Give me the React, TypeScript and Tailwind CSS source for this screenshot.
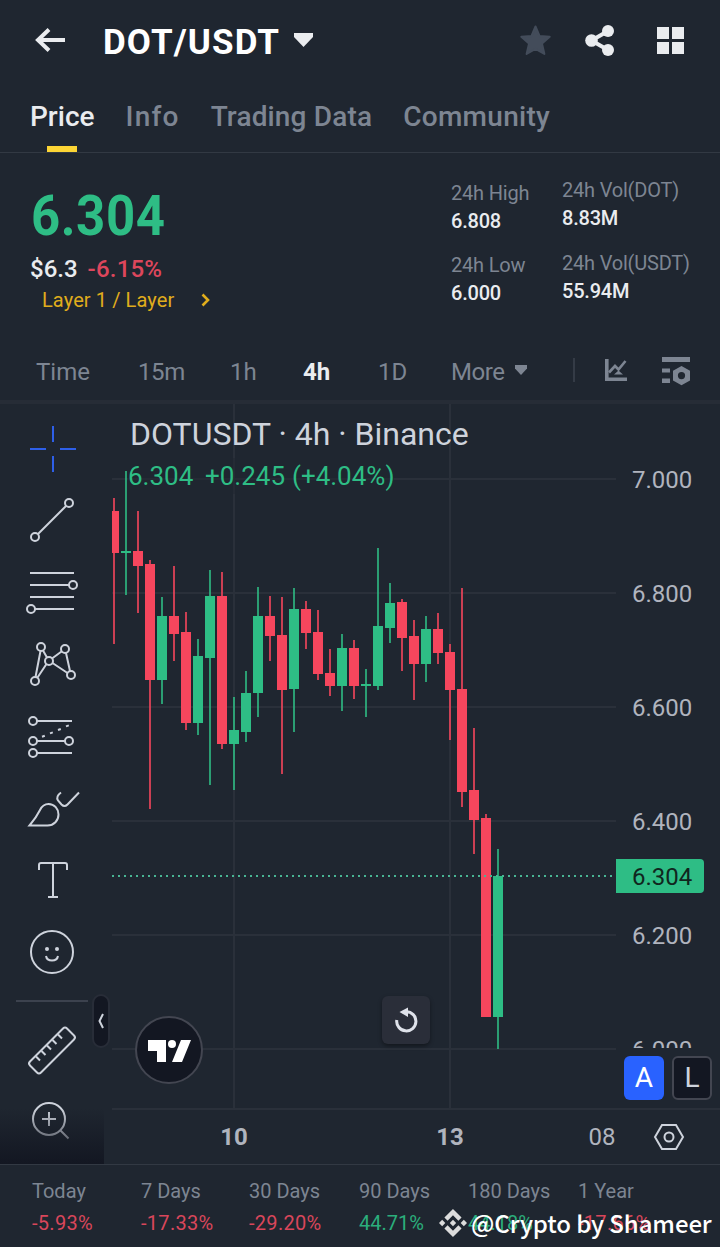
import type { ReactNode } from "react"
import { SiBinance } from "react-icons/si"

const UP = "#2ebd85"
const DOWN = "#f6465d"

const tabs = [
	{ label: "Price", className: "text-[#eaecef]" },
	{ label: "Info", className: "text-[#7d8592] tracking-[1.2px]" },
	{ label: "Trading Data", className: "text-[#7d8592] tracking-[0.15px]" },
	{ label: "Community", className: "text-[#7d8592] tracking-[0.3px]" },
]

const periods = [
	{ label: "Today", value: "-5.93%" },
	{ label: "7 Days", value: "-17.33%" },
	{ label: "30 Days", value: "-29.20%" },
	{ label: "90 Days", value: "44.71%" },
	{ label: "180 Days", value: "44.18%" },
	{ label: "1 Year", value: "-17.66%" },
]

// [high, body top, body bottom, low, rising]
const candles: [number, number, number, number, boolean][] = [
	[498, 511, 553, 644, false],
	[471, 551, 553, 595, true],
	[511, 551, 566, 613, false],
	[560, 564, 680, 809, false],
	[597, 616, 680, 704, true],
	[566, 616, 634, 661, false],
	[612, 632, 723, 730, false],
	[639, 656, 723, 735, true],
	[570, 596, 658, 785, true],
	[572, 596, 744, 749, false],
	[697, 730, 744, 790, true],
	[671, 693, 732, 742, true],
	[587, 616, 693, 717, true],
	[596, 616, 636, 661, false],
	[597, 635, 690, 774, false],
	[588, 609, 689, 732, true],
	[601, 609, 633, 649, false],
	[610, 632, 674, 680, false],
	[649, 673, 686, 696, false],
	[634, 648, 686, 711, true],
	[640, 648, 686, 699, false],
	[669, 684, 686, 717, true],
	[548, 626, 686, 690, true],
	[583, 603, 628, 643, true],
	[599, 602, 638, 671, false],
	[620, 636, 664, 700, false],
	[616, 629, 664, 682, true],
	[613, 629, 653, 664, false],
	[644, 652, 690, 740, false],
	[588, 689, 792, 807, false],
	[728, 790, 820, 854, false],
	[814, 818, 1017, 1017, false],
	[849, 876, 1017, 1049, true],
]

const priceLevels = [
	{ y: 479, label: "7.000" },
	{ y: 593, label: "6.800" },
	{ y: 707, label: "6.600" },
	{ y: 821, label: "6.400" },
	{ y: 935, label: "6.200" },
	{ y: 1049, label: "6.000" },
]

const App = () => {
	return (
		<div className="flex flex-col w-[720px] h-[1247px] overflow-hidden bg-[#1f2630] font-['Roboto',sans-serif] text-[#eaecef]">
			<Header />
			<nav className="flex gap-[31px] h-[73px] pl-[30px] pt-[19px] border-b border-[#323943] text-[28px] leading-9 font-medium">
				{tabs.map((tab, i) => (
					<div key={tab.label} className="flex flex-col items-center justify-between">
						<span className={tab.className}>{tab.label}</span>
						{i === 0 && <div className="w-[30px] h-1.5 bg-[#fcd535]" />}
					</div>
				))}
			</nav>
			<Summary />
			<Timeframes />
			<div className="flex h-[760px]">
				<Toolbar />
				<Chart />
			</div>
			<Performance />
		</div>
	)
}

export default App

const Header = () => (
	<header className="flex items-center h-20 pl-[35px] pr-9">
		<svg width="30" height="26" viewBox="0 0 30 26" fill="none" stroke="#eaecef" strokeWidth="4">
			<path d="M30 13H3M14 2.500L3 13l11 10.500" />
		</svg>
		<h1 className="ml-[38px] text-[35px] leading-10 font-bold tracking-[1.1px] text-white pt-1.5">
			DOT/USDT
		</h1>
		<svg className="ml-[14px]" width="19" height="14" viewBox="0 0 19 14" fill="#eaecef">
			<path d="M0 0h19v4l-9.500 10L0 4z" />
		</svg>
		<div className="flex-1" />
		<svg width="31" height="31" viewBox="0 0 31 31" fill="#434c5a" stroke="#434c5a" strokeWidth="2" strokeLinejoin="round">
			<path d="M15.500 1.500l4 9.400 10.200.9-7.700 6.800 2.400 10.400-8.900-5.200-8.900 5.200 2.400-10.400L1.300 11.800l10.200-.9z" />
		</svg>
		<svg className="ml-[34px]" width="29" height="31" viewBox="0 0 29 31" fill="#eaecef">
			<path d="M23 6L6.500 15.500 23 25" fill="none" stroke="#eaecef" strokeWidth="4" />
			<circle cx="23" cy="6" r="6" />
			<circle cx="6.500" cy="15.500" r="6.300" />
			<circle cx="23" cy="25" r="6" />
		</svg>
		<div className="ml-[43px] grid grid-cols-2 gap-[3px]">
			<div className="size-3 bg-[#eaecef]" />
			<div className="size-3 bg-[#eaecef]" />
			<div className="size-3 bg-[#eaecef]" />
			<div className="size-3 bg-[#eaecef]" />
		</div>
	</header>
)

const Summary = () => (
	<section className="flex h-[191px]">
		<div className="w-[451px] pt-[34px] pl-[31px]">
			<div className="w-fit origin-left scale-x-[0.91] text-[56px] leading-[58px] font-bold tracking-[0.6px] text-[#2ebd85]">
				6.304
			</div>
			<div className="flex mt-2.5 gap-2.5 text-2xl leading-7 font-medium">
				<span className="-ml-px">$6.3</span>
				<span className="text-[#dd465c] tracking-[0.2px]">-6.15%</span>
			</div>
			<div className="flex items-center mt-[3px] pl-[11px] text-xl leading-7 text-[#e0ad1c]">
				<span className="tracking-[0.1px]">Layer 1 / Layer</span>
				<svg className="ml-[27px]" width="9" height="14" viewBox="0 0 9 14" fill="none" stroke="currentColor" strokeWidth="2.600">
					<path d="M1.500 1.500L7 7l-5.500 5.500" />
				</svg>
			</div>
		</div>
		<div className="flex flex-col gap-4 w-[111px] pt-[26px]">
			<Stat label="24h High" value="6.808" />
			<Stat label="24h Low" value="6.000" />
		</div>
		<div className="flex flex-col gap-[17px] pt-[23px]">
			<Stat label="24h Vol(DOT)" value="8.83M" />
			<Stat label="24h Vol(USDT)" value="55.94M" />
		</div>
	</section>
)

const Stat = (props: { label: string; value: string }) => (
	<div className="flex flex-col text-xl leading-7 tracking-[-0.2px] whitespace-nowrap">
		<span className="text-[#7d8592]">{props.label}</span>
		<span className="font-medium">{props.value}</span>
	</div>
)

const Timeframes = () => (
	<div className="flex items-center h-[60px] pl-9 border-b-4 border-[#262c36] text-2xl text-[#7d8592]">
		<div className="grid grid-cols-[102px_92px_73px_75px_73px_64px]">
			<span>Time</span>
			<span className="tracking-[-0.4px]">15m</span>
			<span>1h</span>
			<span className="font-bold text-[#eaecef]">4h</span>
			<span>1D</span>
			<span className="tracking-[-0.4px]">More</span>
		</div>
		<svg className="-mt-1" width="12" height="10" viewBox="0 0 12 10" fill="currentColor">
			<path d="M0 0h12v3.500L6 10 0 3.500z" />
		</svg>
		<div className="ml-[46px] w-0.5 h-6 -mt-1 bg-[#343b46]" />
		<svg className="ml-[30px] -mt-1" width="22" height="24" viewBox="0 0 22 24" fill="none" stroke="currentColor">
			<path d="M1.800 1v20.300H22" strokeWidth="3.600" />
			<path d="M4 14.500l6-6.500 3.500 3.500L20.500 3" strokeWidth="2.600" />
			<path d="M9 16.500h9l-4.500-4z" fill="currentColor" stroke="none" />
		</svg>
		<svg className="ml-[35px] -mt-0.5" width="29" height="30" viewBox="0 0 29 30" fill="currentColor">
			<path d="M0 1h28v5H0zM0 12.500h8v4H0zM0 22.500h8v4.500H0z" />
			<path fillRule="evenodd" d="M19.500 10l8.500 4.800v9.600L19.500 29.200 11 24.400v-9.600zM19.500 16a3.600 3.600 0 100 7.200 3.600 3.600 0 000-7.200z" />
		</svg>
	</div>
)

const Tool = (props: { children: ReactNode }) => (
	<svg
		className="shrink-0"
		width="72"
		height="72"
		viewBox="0 0 72 72"
		fill="none"
		stroke="#ced3dc"
		strokeWidth="2">
		{props.children}
	</svg>
)

const Toolbar = () => (
	<aside className="relative flex flex-col items-center w-[104px] pt-[9px]">
		{/* Cross */}
		<Tool>
			<path d="M37 13v16M37 43v16M14 36h16M44 36h16" stroke="#2e5fe8" />
		</Tool>
		{/* Trend line */}
		<Tool>
			<path d="M22 49L50 21" />
			<circle cx="19" cy="52" r="4" />
			<circle cx="53" cy="18" r="4" />
		</Tool>
		{/* Fib retracement */}
		<Tool>
			<path d="M14 16h44M14 28h39M14 40h44M19 52h39" />
			<circle cx="57" cy="28" r="4" />
			<circle cx="15" cy="52" r="4" />
		</Tool>
		{/* Pattern */}
		<Tool>
			<path d="M19.500 48l5-26M27 21.500l4 7M36 29.500l9.500-7M50 24l4 18M36.500 34l15 10M30.500 35L21.500 48.500" />
			<circle cx="25" cy="18" r="4" />
			<circle cx="49" cy="20" r="4" />
			<circle cx="33" cy="32" r="4" />
			<circle cx="55" cy="46" r="4" />
			<circle cx="19" cy="52" r="4" />
		</Tool>
		{/* Position */}
		<Tool>
			<path d="M21 20h35M21 40h28M21 52h35" />
			<path d="M26 35.800l2.800-1M34 32.400l2.800-1M42 29l2.800-1M50 25.400l2.800-1" />
			<circle cx="17" cy="20" r="4" />
			<circle cx="17" cy="40" r="4" />
			<circle cx="17" cy="52" r="4" />
			<circle cx="53" cy="40" r="4" />
		</Tool>
		{/* Brush */}
		<Tool>
			<path d="M13.500 52.500C20 45 22 41 24 37c2-4 5-6 8.500-6C38.500 31 42.500 36 42.500 41.500c0 6-4.500 11-11 11z" />
			<path d="M63 19.500L51.500 31.500Q48.500 34.500 45.500 31.500L42 27.500Q39.500 23.500 45 19.500" />
		</Tool>
		{/* Text */}
		<Tool>
			<path d="M23 25v-5q0-2 2-2h24q2 0 2 2v5M37 18v34M32 52h10" />
		</Tool>
		{/* Emoji */}
		<Tool>
			<circle cx="36" cy="35" r="21" />
			<circle cx="31" cy="32" r="2" fill="#ced3dc" stroke="none" />
			<circle cx="41" cy="32" r="2" fill="#ced3dc" stroke="none" />
			<path d="M30 39c1 6 11 6 12 0" />
		</Tool>
		<div className="w-[72px] h-0.5 mt-[11px] mb-3 shrink-0 bg-[#3c424e]" />
		{/* Ruler */}
		<Tool>
			<path d="M47 14.500q2-2 4 0l7 7q2 2 0 4L25 58.500q-2 2-4 0l-7-7q-2-2 0-4z" />
			<path d="M20 42.500l4 4M25.500 37l4 4M31 31.500l4 4M36.500 26l4 4M42 20.500l4 4" />
		</Tool>
		<Tool>
			<circle cx="33" cy="33" r="16" />
			<path d="M26 33h14M33 26v14M44.500 44.500l8 8" />
		</Tool>
		<div className="absolute bottom-0 left-0 w-full h-14 bg-linear-to-b from-[#131722]/0 to-[#131722]" />
		{/* Collapse handle */}
		<div className="absolute z-10 left-[92px] top-[590px] flex items-center justify-center w-[18px] h-[54px] rounded-[9px] border-2 border-[#282d38] bg-[#131722]">
			<svg width="6" height="16" viewBox="0 0 6 16" fill="none" stroke="#ced3dc" strokeWidth="2">
				<path d="M5 1L1.500 8 5 15" />
			</svg>
		</div>
	</aside>
)

const Chart = () => (
	<div className="relative w-[616px]">
		<svg width="616" height="760" viewBox="104 404 616 760" fontSize="24" fill="#b0b4be">
			<defs>
				<clipPath id="plot">
					<rect x="112" y="404" width="504" height="704" />
				</clipPath>
				<clipPath id="scale">
					<rect x="616" y="404" width="104" height="644" />
				</clipPath>
			</defs>
			<g stroke="#2a303a" strokeWidth="2">
				{priceLevels.map((level) => (
					<path key={level.label} d={`M112 ${level.y}H616`} />
				))}
				<path d="M234 404V1108M450 404V1108M112 1109H720" />
			</g>
			<g clipPath="url(#plot)">
				{candles.map(([high, top, bottom, low, rising], i) => (
					<g key={i} fill={rising ? UP : DOWN}>
						<rect x={113 + i * 12} y={high} width="2" height={low - high} opacity="0.8" />
						<rect x={109 + i * 12} y={top} width="10" height={bottom - top} />
					</g>
				))}
			</g>
			<path d="M112 876H616" stroke="#49b594" strokeWidth="2" strokeDasharray="2 4" />
			<g clipPath="url(#scale)">
				{priceLevels.map((level) => (
					<text key={level.label} x="632" y={level.y + 9}>
						{level.label}
					</text>
				))}
			</g>
			<path d="M616 859h84q4 0 4 4v26q0 4-4 4h-84z" fill={UP} />
			<text x="632" y="885" fill="#10261e">
				6.304
			</text>
			<g textAnchor="middle">
				<text x="234" y="1145" fontWeight="700">
					10
				</text>
				<text x="450" y="1145" fontWeight="700">
					13
				</text>
				<text x="602" y="1145">
					08
				</text>
			</g>
			<g fill="none" stroke="#ced3dc" strokeWidth="2">
				<path d="M662 1125h14l7 12-7 12h-14l-7-12z" />
				<circle cx="669" cy="1137" r="4.500" />
			</g>
		</svg>

		{/* Legend */}
		<div className="absolute left-6 top-3 whitespace-nowrap">
			<div className="pl-0.5 text-[32px] leading-9 text-[#ced3dc]">DOTUSDT · 4h · Binance</div>
			<div className="flex w-fit mt-1.5 h-9 text-[26px] leading-9 text-[#2ebd85] bg-[#1f2630]/50">
				<span className="w-[77px]">6.304</span>
				<span className="w-[87px]">+0.245</span>
				<span>(+4.04%)</span>
			</div>
		</div>

		<div className="absolute left-[31px] top-[612px] size-[68px] rounded-full border-2 border-[#434651] bg-[#131722]">
			<svg width="64" height="64" viewBox="137 1018 64 64" fill="#fff">
				<path d="M148 1040h18v22h-9v-11h-9zM181 1040h10l-9 22h-10z" />
				<circle cx="172" cy="1044" r="4" />
			</svg>
		</div>

		<div className="absolute left-[278px] top-[592px] size-12 rounded-md bg-[#2a2e39] shadow-[0_2px_4px_rgba(0,0,0,0.4)]">
			<svg width="48" height="48" viewBox="382 996 48 48">
				<path d="M396.800 1020a9.600 9.600 0 109.500-8.300" fill="none" stroke="#dfe2ea" strokeWidth="3" />
				<path d="M399.500 1012l8.500-4.500v9.500z" fill="#dfe2ea" />
			</svg>
		</div>

		{/* Scale mode */}
		<div className="absolute left-[520px] top-[652px] flex gap-2 text-[28px] leading-none">
			<div className="flex items-center justify-center w-10 h-11 rounded-md bg-[#2962ff] text-white">
				A
			</div>
			<div className="flex items-center justify-center w-10 h-11 rounded-md border-2 border-[#434651] bg-[#131722] text-[#ced3dc]">
				L
			</div>
		</div>
	</div>
)

const Performance = () => (
	<footer className="relative h-[83px] pt-3 pl-8 border-t border-[#323943]">
		<div className="grid grid-cols-[109px_108px_110px_109px_110px_1fr] text-xl whitespace-nowrap">
			{periods.map((period) => (
				<div key={period.label} className="flex flex-col gap-1 leading-7">
					<span className="text-[#7d8592]">{period.label}</span>
					<span
						className={
							period.value.startsWith("-")
								? "text-[#d9465b] tracking-[0.3px]"
								: "text-[#2bae7c]"
						}>
						{period.value}
					</span>
				</div>
			))}
		</div>
		<div className="absolute left-[439px] top-[42px] flex items-center gap-1 h-8 whitespace-nowrap">
			<SiBinance size={28} color="#dcdcdc" />
			<span className="font-['Noto_Sans_CJK_SC',sans-serif] text-[24px] leading-8 font-medium tracking-[-0.1px] text-white">
				@Crypto by Shameer
			</span>
		</div>
	</footer>
)
